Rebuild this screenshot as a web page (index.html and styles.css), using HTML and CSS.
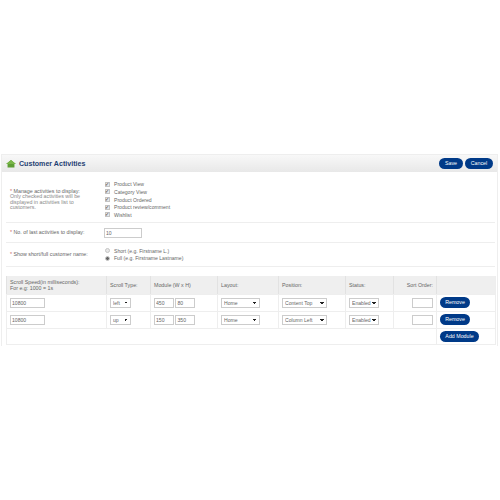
FILE: index.html
```html
<!DOCTYPE html>
<html>
<head>
  <title>Customer Activities</title>
  <link rel="stylesheet" href="styles.css">
</head>
<body>
  <div class="box">
    <div class="heading">
      <h1>
        <svg class="home" viewBox="0 0 12 10"><path d="M6 0 L12 5 L10.3 5 L10.3 9.5 L1.7 9.5 L1.7 5 L0 5 Z" fill="#5e9e34"/><path d="M6 0 L12 5 L0 5 Z" fill="#7ab648"/></svg>
        Customer Activities
      </h1>
      <div class="buttons">
        <a href="#" class="button">Save</a>
        <a href="#" class="button">Cancel</a>
      </div>
    </div>
    <div class="content">
      <table class="form">
        <tr class="row-manage">
          <td class="label">
            <span class="required">*</span> Manage activities to display:<br>
            <span class="help">Only checked activities will be displayed in activities list to customers.</span>
          </td>
          <td>
            <label><input type="checkbox" checked> Product View</label>
            <label><input type="checkbox" checked> Category View</label>
            <label><input type="checkbox" checked> Product Ordered</label>
            <label><input type="checkbox" checked> Product review/comment</label>
            <label><input type="checkbox" checked> Wishlist</label>
          </td>
        </tr>
        <tr class="row-limit">
          <td class="label"><span class="required">*</span> No. of last activities to display:</td>
          <td><input type="text" class="limit" value="10"></td>
        </tr>
        <tr class="row-name">
          <td class="label"><span class="required">*</span> Show short/full customer name:</td>
          <td>
            <label><input type="radio" name="name"> Short (e.g. Firstname L.)</label>
            <label><input type="radio" name="name" checked> Full (e.g. Firstname Lastname)</label>
          </td>
        </tr>
      </table>

      <table class="list">
        <thead>
          <tr>
            <td class="col-speed">Scroll Speed(in milliseconds):<br>For e.g: 1000 = 1s</td>
            <td class="col-type">Scroll Type:</td>
            <td class="col-size">Module (W x H)</td>
            <td class="col-layout">Layout:</td>
            <td class="col-position">Position:</td>
            <td class="col-status">Status:</td>
            <td class="col-sort">Sort Order:</td>
            <td class="col-action"></td>
          </tr>
        </thead>
        <tbody>
          <tr>
            <td><input type="text" class="speed" value="10800"></td>
            <td><select class="type"><option>left</option></select></td>
            <td><input type="text" class="size" value="450"> <input type="text" class="size" value="80"></td>
            <td><select class="layout"><option>Home</option></select></td>
            <td><select class="position"><option>Content Top</option></select></td>
            <td><select class="status"><option>Enabled</option></select></td>
            <td class="col-sort"><input type="text" class="sort"></td>
            <td><a href="#" class="button remove">Remove</a></td>
          </tr>
          <tr>
            <td><input type="text" class="speed" value="10800"></td>
            <td><select class="type"><option>up</option></select></td>
            <td><input type="text" class="size" value="150"> <input type="text" class="size" value="350"></td>
            <td><select class="layout"><option>Home</option></select></td>
            <td><select class="position"><option>Column Left</option></select></td>
            <td><select class="status"><option>Enabled</option></select></td>
            <td class="col-sort"><input type="text" class="sort"></td>
            <td><a href="#" class="button remove">Remove</a></td>
          </tr>
        </tbody>
        <tfoot>
          <tr>
            <td colspan="7"></td>
            <td><a href="#" class="button add">Add Module</a></td>
          </tr>
        </tfoot>
      </table>
    </div>
  </div>
</body>
</html>
```

FILE: styles.css
```css
body {
  margin: 0;
  padding: 154px 1px 0 1px;
  background-color: #fff;
  color: #666;
  font-family: "Liberation Sans", Arial, sans-serif;
  font-size: 5.3px;
}

.box {
  width: 497px;
  height: 192px;
  border-left: 1px solid #eee;
  border-right: 1px solid #eee;
  box-sizing: border-box;
}

.heading {
  display: flex;
  justify-content: space-between;
  align-items: center;
  height: 18px;
  padding: 0 4px 0 4px;
  background: linear-gradient(#f8f8f8, #e8e8e8);
  border-top: 1px solid #eee;
  box-sizing: border-box;
}

h1 {
  display: flex;
  align-items: center;
  gap: 3px;
  margin: 0;
  color: #1f3f73;
  font-size: 7.1px;
  font-weight: bold;
}

.home {
  width: 10px;
  height: 8px;
}

.buttons {
  display: flex;
  gap: 2px;
}

.button {
  display: block;
  box-sizing: border-box;
  height: 11px;
  background-color: #003a88;
  border-radius: 6px;
  color: #fff;
  font-size: 5.3px;
  line-height: 11px;
  text-align: center;
  text-decoration: none;
}

.buttons .button {
  width: 24px;
}

.buttons .button:last-child {
  width: 28px;
}

.content {
  padding: 5px 2px 0 4px;
}

.form {
  width: 100%;
  border-collapse: collapse;
}

.form td {
  padding: 0;
  border-bottom: 1px solid #eee;
  vertical-align: middle;
}

.form .label {
  width: 94px;
  padding-left: 4px;
  line-height: 5.5px;
}

.help {
  display: block;
  width: 80px;
  color: #888;
}

.required {
  color: #c66;
}

.row-manage td {
  height: 45px;
}

.row-limit td {
  height: 19px;
}

.row-name td {
  height: 23px;
}

.form label {
  display: flex;
  align-items: center;
  gap: 4px;
  height: 7.6px;
  padding-left: 1px;
  font-size: 5.1px;
}

.form input[type="checkbox"],
.form input[type="radio"] {
  appearance: none;
  width: 5px;
  height: 5px;
  margin: 0;
  background-color: #e8e8e8;
  border: 1px solid #c4c4c4;
  box-sizing: border-box;
}

.form input[type="radio"] {
  border-radius: 50%;
}

.form input[type="checkbox"]:checked::before {
  content: "\2713";
  display: block;
  margin: -2px 0 0 -1px;
  color: #333;
  font-family: "DejaVu Sans", sans-serif;
  font-size: 5px;
  line-height: 6px;
}

.form input[type="radio"]:checked {
  background-color: #666;
  border-color: #ccc;
}

input[type="text"],
select {
  box-sizing: border-box;
  height: 10px;
  margin: 0;
  padding: 0 1px;
  background-color: #fff;
  border: 1px solid #ccc;
  border-radius: 0;
  color: #666;
  font-family: "Liberation Sans", Arial, sans-serif;
  font-size: 5.1px;
}

select {
  appearance: none;
  padding-left: 2px;
  background-image: linear-gradient(45deg, transparent 50%, #222 50%), linear-gradient(-45deg, transparent 50%, #222 50%);
  background-position: right 4px top 3.5px, right 2px top 3.5px;
  background-size: 2px 2px;
  background-repeat: no-repeat;
}

.limit {
  width: 38px;
}

.list {
  width: 489px;
  margin-top: 9px;
  border-collapse: collapse;
  table-layout: fixed;
}

.list td {
  height: 17px;
  padding: 0 0 0 3px;
  border-left: 1px solid #eee;
  border-bottom: 1px solid #eee;
  box-sizing: border-box;
}

.list td:last-child {
  border-right: 1px solid #eee;
}

.list thead td {
  height: 18px;
  background-color: #efefef;
  border-left-color: #e2e2e2;
  line-height: 6px;
}

.list tfoot td {
  height: 16px;
}

.col-speed { width: 100px; }
.col-type { width: 44px; }
.col-size { width: 67px; }
.col-layout { width: 61px; }
.col-position { width: 67px; }
.col-status { width: 48px; }
.col-sort { width: 43px; }
.col-action { width: 59px; }

.list td.col-sort {
  padding: 0 3px 0 0;
  text-align: right;
}

.speed { width: 35px; }
.size { width: 20px; margin-right: 1px; }
.type { width: 21px; }
.layout { width: 39px; }
.position { width: 45px; }
.status { width: 30px; }
.sort { width: 21px; }

.remove {
  width: 30px;
}

.add {
  width: 39px;
}
```
